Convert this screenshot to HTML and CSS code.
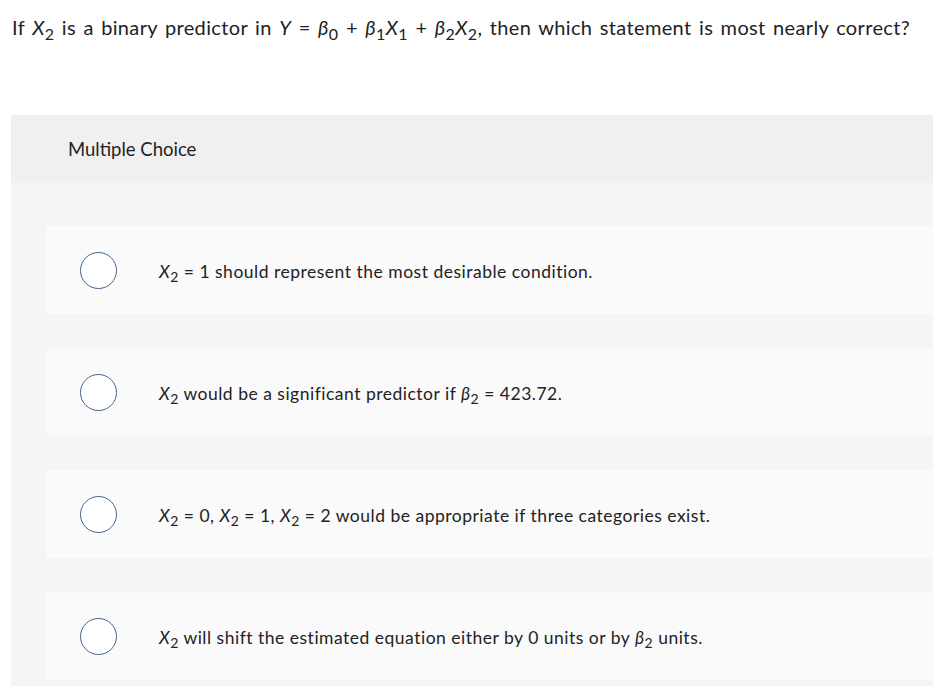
FILE: index.html
```html
<!DOCTYPE html>
<html>
<head>
<meta charset="utf-8">
<link rel="stylesheet" href="styles.css">
</head>
<body>
<div class="question">If <i class="v">X</i><sub>2</sub> is a binary predictor in <span class="math"><i class="v">Y</i> = <i class="v">β</i><sub>0</sub> + <i class="v">β</i><sub>1</sub><i class="v">X</i><sub>1</sub> + <i class="v">β</i><sub>2</sub><i class="v">X</i><sub>2</sub></span>, then which statement is most nearly correct?</div>
<div class="panel">
  <div class="panel-header">Multiple Choice</div>
  <div class="panel-body">
    <div class="option"><span class="radio"></span><span class="label"><i class="v">X</i><sub>2</sub> = 1 should represent the most desirable condition.</span></div>
    <div class="option"><span class="radio"></span><span class="label"><i class="v">X</i><sub>2</sub> would be a significant predictor if <i class="v">β</i><sub>2</sub> = 423.72.</span></div>
    <div class="option"><span class="radio"></span><span class="label"><i class="v">X</i><sub>2</sub> = 0, <i class="v">X</i><sub>2</sub> = 1, <i class="v">X</i><sub>2</sub> = 2 would be appropriate if three categories exist.</span></div>
    <div class="option"><span class="radio"></span><span class="label"><i class="v">X</i><sub>2</sub> will shift the estimated equation either by 0 units or by <i class="v">β</i><sub>2</sub> units.</span></div>
  </div>
</div>
</body>
</html>
```
FILE: styles.css
```css
html, body {
  margin: 0;
  padding: 0;
  background: #ffffff;
  font-family: "Lato", "Liberation Sans", sans-serif;
  color: #222222;
}
.question {
  font-size: 20px;
  line-height: 24px;
  letter-spacing: 0.35px;
  word-spacing: 2px;
  padding: 15px 0 0 12px;
  height: 115px;
  box-sizing: border-box;
  white-space: nowrap;
}
i.v {
  font-style: italic;
}
sub {
  font-size: 0.8em;
  vertical-align: -0.3em;
  line-height: 0;
}
.panel {
  margin-left: 11px;
  background: #f5f5f5;
  border-top-left-radius: 3px;
}
.panel-header {
  height: 68px;
  background: #f0f0f0;
  display: flex;
  align-items: center;
  padding-left: 57px;
  font-size: 18.5px;
  border-top-left-radius: 3px;
}
.panel-body {
  padding: 43px 0 6px 35px;
  display: flex;
  flex-direction: column;
  gap: 34px;
}
.option {
  height: 88px;
  background: #fafafa;
  border-radius: 3px 0 0 3px;
  display: flex;
  align-items: center;
  padding-left: 34px;
  font-size: 17.5px;
  letter-spacing: 0.5px;
}
.radio {
  width: 37px;
  height: 37px;
  box-sizing: border-box;
  border: 1.5px solid #44658c;
  border-radius: 50%;
  background: #ffffff;
  flex: none;
}
.label {
  margin-left: 42px;
  padding-top: 2px;
  white-space: nowrap;
}
```
